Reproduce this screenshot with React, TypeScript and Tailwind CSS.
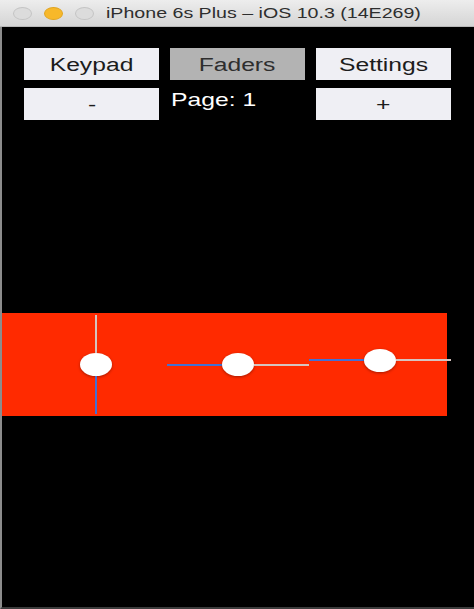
import React from "react";

const sans = { fontFamily: '"Liberation Sans", Arial, sans-serif' };

function Btn({ label, active }: { label: string; active?: boolean }) {
  return (
    <div
      className={`flex h-[32px] w-[135px] items-center justify-center pt-[2px] ${
        active ? "bg-[#b3b3b3] text-[#2e2e2e]" : "bg-[#efeff4] text-[#1c1c1c]"
      }`}
    >
      <span className="inline-block scale-x-[1.37] text-[18px] leading-none">{label}</span>
    </div>
  );
}

function Thumb() {
  return <div className="h-[23px] w-[32px] shrink-0 rounded-[50%] bg-white shadow-[0_1px_3px_rgba(0,0,0,0.35)]" />;
}

function HSlider({ className = "" }: { className?: string }) {
  return (
    <div className={`flex w-[142px] shrink-0 items-center ${className}`}>
      <div className="h-[2px] flex-1 bg-[#4470d4]" />
      <Thumb />
      <div className="h-[2px] flex-1 bg-[#d6c4c0]" />
    </div>
  );
}

function VSlider() {
  return (
    <div className="flex h-full w-[142px] shrink-0 flex-col items-center py-[2px]">
      <div className="w-[2px] flex-1 bg-[#d6c4c0]" />
      <Thumb />
      <div className="w-[2px] flex-1 bg-[#4470d4]" />
    </div>
  );
}

export default function App() {
  return (
    <div className="flex h-[609px] w-[474px] flex-col overflow-hidden bg-black" style={sans}>
      {/* window title bar */}
      <div className="flex h-[27px] shrink-0 items-center border-b border-[#b8b8b8] bg-gradient-to-b from-[#ededed] to-[#d5d5d5]">
        <div className="ml-[13px] flex items-center gap-[12px]">
          <span className="h-[13px] w-[19px] rounded-[50%] border border-[#c4c4c4] bg-[#dcdcdc]" />
          <span className="h-[13px] w-[19px] rounded-[50%] border border-[#e0a420] bg-[#f7b82a]" />
          <span className="h-[13px] w-[19px] rounded-[50%] border border-[#c4c4c4] bg-[#dcdcdc]" />
        </div>
        <div className="ml-[12px] origin-left scale-x-[1.4] whitespace-nowrap text-[14px] text-[#2e2e2e]">
          iPhone 6s Plus – iOS 10.3 (14E269)
        </div>
      </div>

      {/* simulator screen */}
      <div className="flex flex-1 flex-col border-b-2 border-l-2 border-[#3c3c3c] border-l-[#8c8c8c] pt-[21px]">
        <div className="flex flex-col gap-[8px] pl-[22px]">
          <div className="flex gap-[11px]">
            <Btn label="Keypad" />
            <Btn label="Faders" active />
            <Btn label="Settings" />
          </div>
          <div className="flex gap-[11px]">
            <Btn label="-" />
            <div className="w-[135px] pl-[1px] pt-[1px] text-white">
              <span className="inline-block origin-left scale-x-[1.3] text-[19px] leading-[22px]">Page: 1</span>
            </div>
            <Btn label="+" />
          </div>
        </div>

        <div className="mt-[193px] flex h-[103px] w-[445px] items-center bg-[#ff2a00] pl-[23px]">
          <VSlider />
          <HSlider />
          <HSlider className="-mt-[9px]" />
        </div>
      </div>
    </div>
  );
}
